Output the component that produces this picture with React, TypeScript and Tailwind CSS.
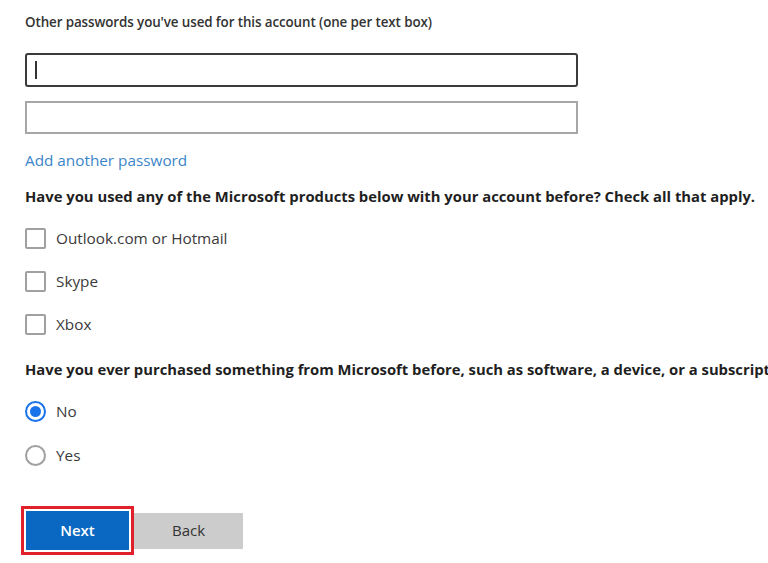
import { useState } from 'react'

const font = { fontFamily: '"Open Sans", "Noto Sans", sans-serif' }

const products = ['Outlook.com or Hotmail', 'Skype', 'Xbox']

export default function App() {
  const [checked, setChecked] = useState<Record<string, boolean>>({})
  const [purchased, setPurchased] = useState('No')

  return (
    <div className="w-[768px] h-[563px] overflow-hidden bg-white text-[#262626]" style={font}>
      <div className="pl-[25px] pt-[12px] flex flex-col">
        <p className="text-[13.4px] font-semibold text-[#333] leading-[21px] whitespace-nowrap tracking-[-0.1px]">
          Other passwords you've used for this account (one per text box)
        </p>

        <div className="mt-[20px] w-[553px] h-[34px] border-2 border-[#3b3b3b] rounded-[3px] flex items-center pl-[8px]">
          <span className="w-[2px] h-[18px] bg-[#333]" />
        </div>
        <div className="mt-[14px] w-[553px] h-[33px] border-2 border-[#a6a6a6]" />

        <a className="mt-[16px] text-[15.3px] text-[#3b86c9] leading-[20px] cursor-pointer">Add another password</a>

        <p className="mt-[16px] text-[14.8px] font-bold text-[#1f1f1f] leading-[20px] whitespace-nowrap">
          Have you used any of the Microsoft products below with your account before? Check all that apply.
        </p>

        <div className="mt-[22px] flex flex-col gap-[22px]">
          {products.map((p) => (
            <label key={p} className="flex items-center gap-[10px] h-[21px] cursor-pointer">
              <input
                type="checkbox"
                className="sr-only"
                checked={!!checked[p]}
                onChange={() => setChecked({ ...checked, [p]: !checked[p] })}
              />
              <span className="w-[21px] h-[21px] border-2 border-[#a0a0a0] rounded-[2px]" />
              <span className="text-[15.3px] text-[#3a3a3a]">{p}</span>
            </label>
          ))}
        </div>

        <p className="mt-[24px] text-[14.8px] font-bold text-[#1f1f1f] leading-[20px] whitespace-nowrap">
          Have you ever purchased something from Microsoft before, such as software, a device, or a subscription?
        </p>

        <div className="mt-[22px] flex flex-col gap-[23px]">
          {['No', 'Yes'].map((o) => (
            <label key={o} className="flex items-center gap-[10px] h-[21px] cursor-pointer">
              <input type="radio" className="sr-only" checked={purchased === o} onChange={() => setPurchased(o)} />
              {purchased === o ? (
                <span className="w-[21px] h-[21px] rounded-full border-2 border-[#1a73e8] flex items-center justify-center">
                  <span className="w-[11px] h-[11px] rounded-full bg-[#1a73e8]" />
                </span>
              ) : (
                <span className="w-[21px] h-[21px] rounded-full border-2 border-[#a0a0a0]" />
              )}
              <span className="text-[15.3px] text-[#3a3a3a]">{o}</span>
            </label>
          ))}
        </div>

        <div className="mt-[40px] -ml-[4px] flex items-center">
          <div className="border-[3px] border-[#e0202a] p-[2px] bg-white">
            <button className="w-[103px] h-[39px] bg-[#0a67c2] text-white text-[15px] font-semibold">Next</button>
          </div>
          <button className="w-[109px] h-[36px] bg-[#cccccc] text-[#333] text-[15px]">Back</button>
        </div>
      </div>
    </div>
  )
}
